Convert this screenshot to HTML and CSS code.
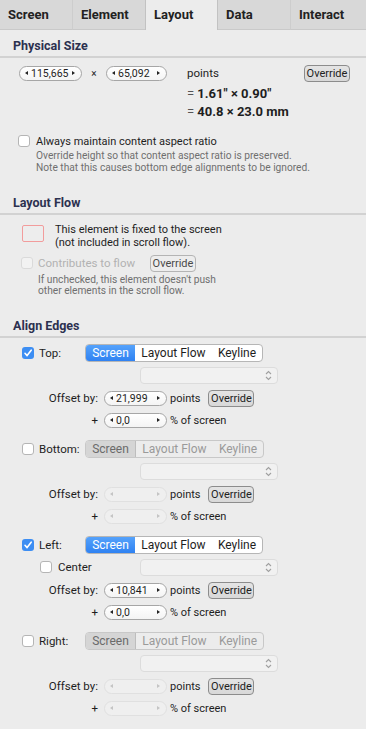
FILE: index.html
```html
<!DOCTYPE html>
<html>
<head>
    <meta name="viewport" content="width=device-width, initial-scale=1.0">
    <title>Layout Inspector</title>
    <link rel="stylesheet" href="styles.css">
</head>
<body>
    <div class="tabs">
        <div class="tab">Screen</div>
        <div class="tab">Element</div>
        <div class="tab active">Layout</div>
        <div class="tab">Data</div>
        <div class="tab">Interact</div>
    </div>

    <!-- Physical Size -->
    <div class="section-title first">Physical Size</div>
    <div class="size-row">
        <div class="stepper w63">
            <span class="arr l"></span><span class="val">115,665</span><span class="arr r"></span>
        </div>
        <span class="times">×</span>
        <div class="stepper w61">
            <span class="arr l"></span><span class="val">65,092</span><span class="arr r"></span>
        </div>
        <span class="unit-points">points</span>
        <button class="override right">Override</button>
    </div>
    <div class="eq first-eq"><span class="eq-sign">=</span> 1.61" × 0.90"</div>
    <div class="eq"><span class="eq-sign">=</span> 40.8 × 23.0 mm</div>

    <label class="check-row aspect">
        <span class="cb"></span>
        <span>Always maintain content aspect ratio</span>
    </label>
    <div class="desc aspect-desc">
        Override height so that content aspect ratio is preserved.<br>
        Note that this causes bottom edge alignments to be ignored.
    </div>

    <!-- Layout Flow -->
    <div class="section-title flow-title">Layout Flow</div>
    <div class="fixed-row">
        <div class="fixed-box"></div>
        <div class="fixed-text">This element is fixed to the screen<br>(not included in scroll flow).</div>
    </div>
    <div class="contrib-row">
        <span class="cb disabled"></span>
        <span class="contrib-label">Contributes to flow</span>
        <button class="override dim">Override</button>
    </div>
    <div class="desc flow-desc">
        If unchecked, this element doesn't push<br>
        other elements in the scroll flow.
    </div>

    <!-- Align Edges -->
    <div class="section-title align-title">Align Edges</div>

    <div class="edge edge-first">
        <div class="seg-row">
            <span class="cb checked"></span>
            <span class="edge-label">Top:</span>
            <div class="segmented">
                <span class="seg s1 on">Screen</span><span class="seg s2">Layout Flow</span><span class="seg s3">Keyline</span>
            </div>
        </div>
        <div class="dd-row"><div class="dd-lead"></div><div class="dropdown"><span class="updown"></span></div></div>
        <div class="num-row">
            <span class="num-label">Offset by:</span>
            <div class="stepper w63"><span class="arr l"></span><span class="val">21,999</span><span class="arr r"></span></div>
            <span class="unit">points</span>
            <button class="override">Override</button>
        </div>
        <div class="num-row">
            <span class="num-label">+</span>
            <div class="stepper w63"><span class="arr l"></span><span class="val">0,0</span><span class="arr r"></span></div>
            <span class="unit">% of screen</span>
        </div>
    </div>

    <div class="edge">
        <div class="seg-row">
            <span class="cb"></span>
            <span class="edge-label">Bottom:</span>
            <div class="segmented off">
                <span class="seg s1 on">Screen</span><span class="seg s2">Layout Flow</span><span class="seg s3">Keyline</span>
            </div>
        </div>
        <div class="dd-row"><div class="dd-lead"></div><div class="dropdown"><span class="updown"></span></div></div>
        <div class="num-row">
            <span class="num-label">Offset by:</span>
            <div class="stepper w63 empty"><span class="arr l"></span><span class="val"></span><span class="arr r"></span></div>
            <span class="unit">points</span>
            <button class="override">Override</button>
        </div>
        <div class="num-row">
            <span class="num-label">+</span>
            <div class="stepper w63 empty"><span class="arr l"></span><span class="val"></span><span class="arr r"></span></div>
            <span class="unit">% of screen</span>
        </div>
    </div>

    <div class="edge">
        <div class="seg-row">
            <span class="cb checked"></span>
            <span class="edge-label">Left:</span>
            <div class="segmented">
                <span class="seg s1 on">Screen</span><span class="seg s2">Layout Flow</span><span class="seg s3">Keyline</span>
            </div>
        </div>
        <div class="dd-row">
            <div class="dd-lead center-lead"><span class="cb"></span><span class="center-label">Center</span></div>
            <div class="dropdown"><span class="updown"></span></div>
        </div>
        <div class="num-row">
            <span class="num-label">Offset by:</span>
            <div class="stepper w63"><span class="arr l"></span><span class="val">10,841</span><span class="arr r"></span></div>
            <span class="unit">points</span>
            <button class="override">Override</button>
        </div>
        <div class="num-row">
            <span class="num-label">+</span>
            <div class="stepper w63"><span class="arr l"></span><span class="val">0,0</span><span class="arr r"></span></div>
            <span class="unit">% of screen</span>
        </div>
    </div>

    <div class="edge">
        <div class="seg-row">
            <span class="cb"></span>
            <span class="edge-label">Right:</span>
            <div class="segmented off">
                <span class="seg s1 on">Screen</span><span class="seg s2">Layout Flow</span><span class="seg s3">Keyline</span>
            </div>
        </div>
        <div class="dd-row"><div class="dd-lead"></div><div class="dropdown"><span class="updown"></span></div></div>
        <div class="num-row">
            <span class="num-label">Offset by:</span>
            <div class="stepper w63 empty"><span class="arr l"></span><span class="val"></span><span class="arr r"></span></div>
            <span class="unit">points</span>
            <button class="override">Override</button>
        </div>
        <div class="num-row">
            <span class="num-label">+</span>
            <div class="stepper w63 empty"><span class="arr l"></span><span class="val"></span><span class="arr r"></span></div>
            <span class="unit">% of screen</span>
        </div>
    </div>
</body>
</html>
```

FILE: styles.css
```css
body {
    margin: 0;
    background-color: #ececec;
    font-family: Roboto, "Liberation Sans", sans-serif;
    font-size: 11.5px;
    color: #1e1e1e;
    overflow: hidden;
}
.tabs {
    display: flex;
    height: 30px;
    background-color: #d8d8d8;
}
.tab {
    width: 73px;
    box-sizing: border-box;
    padding-left: 8px;
    line-height: 30px;
    font-weight: 700;
    font-size: 13px;
    color: #222;
    border-right: 1px solid #cdcdcd;
    border-bottom: 1px solid #c9c9c9;
}
.tab:last-child {
    border-right: none;
    flex: 1;
}
.tab.active {
    background-color: #ececec;
    border-bottom: none;
    border-left: 1px solid #c2c2c2;
    border-right: 1px solid #c2c2c2;
    margin-left: -1px;
}
.section-title {
    height: 20px;
    line-height: 20px;
    padding-left: 13px;
    font-weight: 700;
    font-size: 12.5px;
    color: #2c3150;
    border-bottom: 2px solid #d2d2d2;
}
.section-title.first { margin-top: 6px; }
.flow-title { margin-top: 19px; }
.align-title { margin-top: 20px; }

/* steppers */
.stepper {
    display: flex;
    align-items: center;
    height: 15px;
    box-sizing: border-box;
    border: 1px solid #a6a6a6;
    border-radius: 8px;
    background: linear-gradient(#ffffff, #f4f4f4);
    padding: 0 6px 0 5px;
    font-size: 10.5px;
}
.stepper.w63 { width: 63px; }
.stepper.w61 { width: 61px; }
.stepper .val { flex: 1; padding-left: 3px; white-space: nowrap; }
.arr {
    flex: none;
    width: 0;
    height: 0;
    border-top: 2.5px solid transparent;
    border-bottom: 2.5px solid transparent;
}
.arr.l { border-right: 3.5px solid #222; }
.arr.r { border-left: 3.5px solid #222; }
.stepper.empty {
    border-color: #e0e0e0;
    background: #efefef;
}
.stepper.empty .arr.l { border-right-color: #c4c4c4; }
.stepper.empty .arr.r { border-left-color: #c4c4c4; }

.override {
    font-family: inherit;
    font-size: 11px;
    color: #222;
    height: 17px;
    width: 46px;
    padding: 0;
    border: 1px solid #8c8c8c;
    border-radius: 4px;
    background: linear-gradient(#e4e4e4, #d8d8d8);
}
.override.dim {
    border-color: #b4b4b4;
    background: #ededed;
    color: #4a4a4a;
}

/* physical size */
.size-row {
    display: flex;
    align-items: center;
    height: 20px;
    margin-top: 5px;
    padding-left: 19px;
    padding-right: 16px;
}
.times { width: 24px; text-align: center; font-size: 10px; }
.unit-points { margin-left: 20px; }
.override.right { margin-left: auto; }
.eq {
    line-height: 18px;
    padding-left: 187px;
    font-weight: 700;
    font-size: 13px;
}
.first-eq { margin-top: 2px; }
.eq-sign { font-weight: 400; color: #555; }

/* checkboxes */
.cb {
    display: inline-block;
    flex: none;
    width: 12px;
    height: 12px;
    box-sizing: border-box;
    border: 1px solid #b5b5b5;
    border-radius: 3px;
    background: #fff;
}
.cb.disabled {
    border-color: #dadada;
    background: #f2f2f2;
}
.cb.checked {
    border: none;
    background: #3d8ef3 url("data:image/svg+xml;utf8,<svg xmlns='http://www.w3.org/2000/svg' width='12' height='12'><path d='M3 6.3 L5.1 8.6 L9.2 3.2' fill='none' stroke='white' stroke-width='1.6' stroke-linecap='round' stroke-linejoin='round'/></svg>") no-repeat center;
}
.check-row {
    display: flex;
    align-items: center;
    gap: 6px;
    height: 18px;
    padding-left: 18px;
    font-size: 11px;
}
.aspect { margin-top: 11px; }
.desc {
    font-size: 10.2px;
    color: #6f6f6f;
}
.aspect-desc { padding-left: 36px; line-height: 12px; }
.flow-desc { padding-left: 38px; line-height: 11px; margin-top: 2px; }

/* layout flow */
.fixed-row {
    display: flex;
    margin-top: 8px;
    padding-left: 22px;
}
.fixed-box {
    width: 22px;
    height: 17px;
    margin-top: 2px;
    box-sizing: border-box;
    border: 1px solid #f29c9c;
    border-radius: 2px;
    background: #ededed;
}
.fixed-text {
    margin-left: 11px;
    line-height: 13px;
    font-size: 11px;
}
.contrib-row {
    display: flex;
    align-items: center;
    height: 18px;
    margin-top: 5px;
    padding-left: 21px;
}
.contrib-label {
    margin-left: 5px;
    color: #b2b2b2;
    font-size: 11.5px;
    width: 112px;
    white-space: nowrap;
}

/* align edges */
.edge { padding-top: 12px; }
.edge.edge-first { padding-top: 6px; }
.seg-row {
    display: flex;
    align-items: center;
    height: 18px;
    padding-left: 22px;
}
.edge-label {
    width: 46px;
    margin-left: 5px;
    font-size: 11.5px;
}
.segmented {
    display: flex;
    height: 18px;
    box-sizing: border-box;
    border: 1px solid #b6b6b6;
    border-radius: 4px;
    background: #fff;
    overflow: hidden;
    font-size: 12px;
}
.seg {
    line-height: 16px;
    text-align: center;
}
.seg.s1 { width: 49px; }
.seg.s2 { width: 77px; }
.seg.s3 { width: 50px; }
.seg.on {
    background: linear-gradient(#55a2fb, #2f82f2);
    color: #fff;
}
.segmented.off {
    background: #ececec;
    border-color: #c8c8c8;
    color: #9a9a9a;
}
.segmented.off .seg.on {
    background: #d5d5d5;
    color: #6a6a6a;
    border-right: 1px solid #bdbdbd;
}
.dd-row {
    display: flex;
    align-items: center;
    height: 16px;
    margin-top: 5px;
}
.dd-lead {
    width: 140px;
    display: flex;
    align-items: center;
}
.center-lead { padding-left: 40px; box-sizing: border-box; }
.center-label { margin-left: 6px; font-size: 11.5px; }
.dropdown {
    position: relative;
    width: 138px;
    height: 17px;
    box-sizing: border-box;
    border: 1px solid #dcdcdc;
    border-radius: 4px;
    background: #f1f1f1;
}
.updown {
    position: absolute;
    right: 5px;
    top: 2px;
    width: 7px;
    height: 11px;
    background: url("data:image/svg+xml;utf8,<svg xmlns='http://www.w3.org/2000/svg' width='7' height='11'><path d='M1 4 L3.5 1.5 L6 4 M1 7 L3.5 9.5 L6 7' fill='none' stroke='%23a0a0a0' stroke-width='1.1'/></svg>") no-repeat;
}
.num-row {
    display: flex;
    align-items: center;
    height: 16px;
    margin-top: 6px;
}
.dd-row + .num-row { margin-top: 7px; }
.num-label {
    width: 98px;
    text-align: right;
    margin-right: 6px;
    font-size: 11.5px;
}
.unit {
    margin-left: 3px;
    margin-right: 8px;
    font-size: 11px;
}
```
